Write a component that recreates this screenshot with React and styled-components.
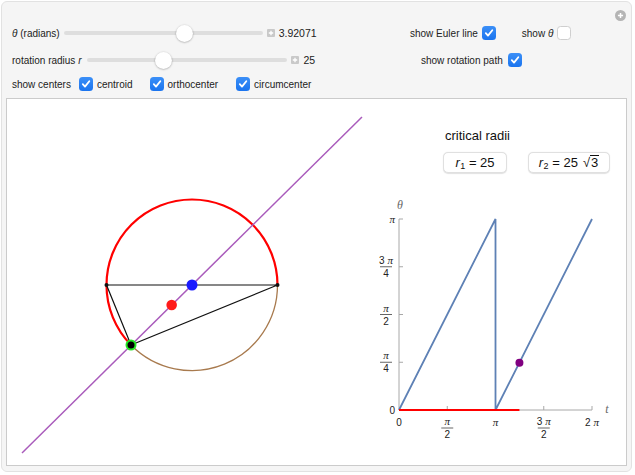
import React from "react";
import styled, { createGlobalStyle } from "styled-components";

const Global = createGlobalStyle`
  html, body { margin: 0; padding: 0; background: #ffffff; }
  body { font-family: "Liberation Sans", Arial, sans-serif; }
  * { box-sizing: border-box; }
`;

const Panel = styled.div`
  position: relative;
  width: 631px;
  height: 471px;
  margin: 1px 0 0 1px;
  border: 1px solid #e2e2e2;
  border-radius: 6px;
  background: #f5f5f5;
  display: flex;
  flex-direction: column;
  padding: 0 4px 5px 4px;
`;

const CornerButton = styled.div`
  position: absolute;
  top: 8px;
  right: 5px;
  width: 11px;
  height: 11px;
  border-radius: 50%;
  background: #b4b4b4;
  display: flex;
  align-items: center;
  justify-content: center;
`;

const Controls = styled.div`
  height: 96px;
  display: flex;
  padding: 21px 0 0 6px;
  font-size: 10px;
  color: #222;
`;

const LeftCol = styled.div`
  width: 308px;
  display: flex;
  flex-direction: column;
`;

const RightCol = styled.div`
  display: flex;
  flex-direction: column;
  padding-left: 90px;
`;

const Row = styled.div`
  display: flex;
  align-items: center;
  height: 20px;
  margin-top: ${(p) => p.$mt || 0}px;
  padding-left: ${(p) => p.$pl || 0}px;
`;

const Label = styled.span`
  white-space: nowrap;
  margin-left: ${(p) => p.$ml || 0}px;
`;

const Ital = styled.span`
  font-style: italic;
`;

const SliderTrack = styled.div`
  position: relative;
  width: ${(p) => p.$w}px;
  height: 4px;
  border-radius: 2px;
  background: #dedede;
  margin: 0 4px 0 ${(p) => p.$ml}px;
`;

const Thumb = styled.div`
  position: absolute;
  top: 50%;
  width: 17px;
  height: 17px;
  margin: -8.5px 0 0 -8.5px;
  border-radius: 50%;
  background: #ffffff;
  box-shadow: 0 0.5px 2px rgba(0, 0, 0, 0.35);
`;

const PlusBox = styled.div`
  width: 8px;
  height: 8px;
  background: #c9c9c9;
  border-radius: 1px;
  display: flex;
  align-items: center;
  justify-content: center;
  margin-right: ${(p) => p.$mr}px;
`;

const Value = styled.span`
  font-size: 10.5px;
`;

const Box = styled.div`
  width: 14px;
  height: 14px;
  border-radius: 3.5px;
  flex: none;
  display: flex;
  align-items: center;
  justify-content: center;
  background: ${(p) => (p.$on ? "linear-gradient(#3b8ff7, #1a74ef)" : "#ffffff")};
  border: ${(p) => (p.$on ? "none" : "1px solid #cfcfcf")};
  margin: 0 ${(p) => p.$mr || 0}px 0 ${(p) => p.$ml || 0}px;
`;

const Work = styled.div`
  flex: 1;
  background: #ffffff;
  border: 1px solid #cbcbcb;
  display: flex;
`;

const Geo = styled.svg`
  display: block;
  flex: none;
`;

const Side = styled.div`
  display: flex;
  flex-direction: column;
  align-items: flex-start;
`;

const Title = styled.div`
  margin: 29px 0 0 75px;
  font-size: 13px;
  line-height: 16px;
  color: #111;
`;

const RadiiRow = styled.div`
  display: flex;
  gap: 21px;
  margin: 8px 0 0 73px;
`;

const RadiusBox = styled.div`
  width: ${(p) => p.$w}px;
  height: 21px;
  border: 1px solid #e0e0e0;
  border-radius: 5px;
  background: #fff;
  box-shadow: 0 0.5px 1px rgba(0, 0, 0, 0.12);
  display: flex;
  align-items: center;
  justify-content: center;
  font-size: 13px;
  color: #111;
`;

const Sub = styled.span`
  font-size: 9px;
  position: relative;
  top: 3px;
  margin-left: 0.5px;
`;

const Sqrt = styled.span`
  margin-left: 5px;
  display: inline-flex;
  align-items: flex-start;
`;

const Radicand = styled.span`
  border-top: 1px solid #111;
  padding: 0 1px;
  line-height: 14px;
`;

const Chart = styled.svg`
  display: block;
  margin-top: 23px;
  overflow: visible;
`;

const Check = () => (
  <svg width="10" height="10" viewBox="0 0 10 10">
    <path d="M1.8 5.2 L4 7.6 L8.3 2.2" fill="none" stroke="#fff" strokeWidth="1.8" strokeLinecap="round" strokeLinejoin="round" />
  </svg>
);

const Plus = ({ size = 6, color = "#fff" }) => (
  <svg width={size} height={size} viewBox="0 0 6 6">
    <path d="M3 0.8 V5.2 M0.8 3 H5.2" stroke={color} strokeWidth="1.3" />
  </svg>
);

const CheckBox = ({ on, ml, mr }) => (
  <Box $on={on} $ml={ml} $mr={mr}>{on && <Check />}</Box>
);

const Slider = ({ width, ml, pos }) => (
  <SliderTrack $w={width} $ml={ml}>
    <Thumb style={{ left: `${pos * 100}%` }} />
  </SliderTrack>
);

/* geometry (svg origin = page (7,99)) */
const O = [185, 186];
const R = 85.5;
const A = [99.5, 186];
const B = [270.5, 186];
const C = [124, 246];
const G = [(A[0] + B[0] + C[0]) / 3, (A[1] + B[1] + C[1]) / 3];

const Geometry = () => (
  <Geo width="363" height="365" viewBox="0 0 363 365">
    <path d={`M${C[0]},${C[1]} A${R},${R} 0 0 1 ${A[0]},${A[1]}`} fill="none" stroke="#ff0000" strokeWidth="2.2" />
    <path d={`M${A[0]},${A[1]} A${R},${R} 0 0 1 ${B[0]},${B[1]}`} fill="none" stroke="#ff0000" strokeWidth="2.2" />
    <path d={`M${B[0]},${B[1]} A${R},${R} 0 0 1 ${C[0]},${C[1]}`} fill="none" stroke="#a87a4e" strokeWidth="1.3" />
    <line x1="15" y1="354" x2="355" y2="18" stroke="#a95bbb" strokeWidth="1.5" />
    <polygon points={`${A.join(",")} ${B.join(",")} ${C.join(",")}`} fill="none" stroke="#111" strokeWidth="1.2" />
    <circle cx={A[0]} cy={A[1]} r="2" fill="#111" />
    <circle cx={B[0]} cy={B[1]} r="2" fill="#111" />
    <circle cx={O[0]} cy={O[1]} r="5.5" fill="#1a1aff" />
    <circle cx={G[0]} cy={G[1]} r="5.3" fill="#ff1a1a" />
    <circle cx={C[0]} cy={C[1]} r="5.5" fill="#22e622" />
    <circle cx={C[0]} cy={C[1]} r="3.5" fill="#000" />
  </Geo>
);

/* chart (svg origin = page (370,196)) */
const X0 = 29;
const Y0 = 214;
const XS = 193 / (2 * Math.PI);
const YS = 191 / Math.PI;
const px = (t) => X0 + t * XS;
const py = (v) => Y0 - v * YS;
const PI = Math.PI;
const theta = 3.92071;

const Frac = ({ x, y, num, den }) => (
  <g>
    <text x={x} y={y - 3} textAnchor="middle" fontSize="10" fill="#222">{num}</text>
    <line x1={x - 6} y1={y} x2={x + 6} y2={y} stroke="#222" strokeWidth="0.7" />
    <text x={x} y={y + 10} textAnchor="middle" fontSize="10" fill="#222">{den}</text>
  </g>
);

const PiT = ({ children }) => (
  <tspan fontFamily='"Liberation Serif", serif' fontStyle="italic" fontSize="11">{children}</tspan>
);

const ThetaChart = () => (
  <Chart width="250" height="245" viewBox="0 0 250 245" fontFamily='"Liberation Sans", Arial, sans-serif'>
    <line x1={X0} y1={Y0} x2={X0} y2={py(PI)} stroke="#a8a8a8" strokeWidth="1" />
    <line x1={X0} y1={Y0} x2={px(2 * PI)} y2={Y0} stroke="#a8a8a8" strokeWidth="1" />
    {[0, 0.25, 0.5, 0.75, 1].map((k) => (
      <line key={"y" + k} x1={X0} y1={py(k * PI)} x2={X0 + 4} y2={py(k * PI)} stroke="#a8a8a8" />
    ))}
    {[0.5, 1, 1.5, 2].map((k) => (
      <line key={"x" + k} x1={px(k * PI)} y1={Y0} x2={px(k * PI)} y2={Y0 - 4} stroke="#a8a8a8" />
    ))}
    <polyline
      points={`${px(0)},${py(0)} ${px(PI)},${py(PI)} ${px(PI)},${py(0)} ${px(2 * PI)},${py(PI)}`}
      fill="none"
      stroke="#5e81b5"
      strokeWidth="1.8"
    />
    <line x1={px(0)} y1={Y0} x2={px(theta)} y2={Y0} stroke="#ff0000" strokeWidth="2.2" />
    <circle cx={px(theta)} cy={py(theta - PI)} r="4" fill="#800080" />
    <text x="30" y="13" textAnchor="middle" fontFamily='"Liberation Serif", serif' fontStyle="italic" fontSize="12" fill="#666">θ</text>
    <text x="237" y="217" textAnchor="middle" fontFamily='"Liberation Serif", serif' fontStyle="italic" fontSize="12" fill="#666">t</text>
    <text x="25" y={Y0 + 4} textAnchor="end" fontSize="10" fill="#222">0</text>
    <text x="25" y={py(PI) + 4} textAnchor="end" fill="#222"><PiT>π</PiT></text>
    <Frac x={16} y={py(0.75 * PI)} num={<><tspan>3 </tspan><PiT>π</PiT></>} den="4" />
    <Frac x={16} y={py(0.5 * PI)} num={<PiT>π</PiT>} den="2" />
    <Frac x={16} y={py(0.25 * PI)} num={<PiT>π</PiT>} den="4" />
    <text x={px(0)} y={Y0 + 16} textAnchor="middle" fontSize="10" fill="#222">0</text>
    <Frac x={px(0.5 * PI)} y={Y0 + 18} num={<PiT>π</PiT>} den="2" />
    <text x={px(PI)} y={Y0 + 16} textAnchor="middle" fill="#222"><PiT>π</PiT></text>
    <Frac x={px(1.5 * PI)} y={Y0 + 18} num={<><tspan>3 </tspan><PiT>π</PiT></>} den="2" />
    <text x={px(2 * PI)} y={Y0 + 16} textAnchor="middle" fontSize="10" fill="#222"><tspan>2 </tspan><PiT>π</PiT></text>
  </Chart>
);

export default function App() {
  return (
    <>
      <Global />
      <Panel>
        <CornerButton>
          <Plus size={7} />
        </CornerButton>
        <Controls>
          <LeftCol>
            <Row>
              <Label><Ital>θ</Ital> (radians)</Label>
              <Slider width={199} ml={4} pos={0.608} />
              <PlusBox $mr={4}><Plus /></PlusBox>
              <Value>3.92071</Value>
            </Row>
            <Row $mt={7}>
              <Label>rotation radius <Ital>r</Ital></Label>
              <Slider width={200} ml={5} pos={0.385} />
              <PlusBox $mr={5}><Plus /></PlusBox>
              <Value>25</Value>
            </Row>
            <Row $mt={4}>
              <Label>show centers</Label>
              <CheckBox on ml={8} mr={4} />
              <Label>centroid</Label>
              <CheckBox on ml={17} mr={4} />
              <Label>orthocenter</Label>
              <CheckBox on ml={18} mr={4} />
              <Label>circumcenter</Label>
            </Row>
          </LeftCol>
          <RightCol>
            <Row>
              <Label>show Euler line</Label>
              <CheckBox on ml={4} />
              <Label $ml={26}>show <Ital>θ</Ital></Label>
              <CheckBox ml={4} />
            </Row>
            <Row $mt={7} $pl={11}>
              <Label>show rotation path</Label>
              <CheckBox on ml={5} />
            </Row>
          </RightCol>
        </Controls>
        <Work>
          <Geometry />
          <Side>
            <Title>critical radii</Title>
            <RadiiRow>
              <RadiusBox $w={64}>
                <Ital>r</Ital><Sub>1</Sub>&nbsp;= 25
              </RadiusBox>
              <RadiusBox $w={82}>
                <Ital>r</Ital><Sub>2</Sub>&nbsp;= 25
                <Sqrt>√<Radicand>3</Radicand></Sqrt>
              </RadiusBox>
            </RadiiRow>
            <ThetaChart />
          </Side>
        </Work>
      </Panel>
    </>
  );
}
